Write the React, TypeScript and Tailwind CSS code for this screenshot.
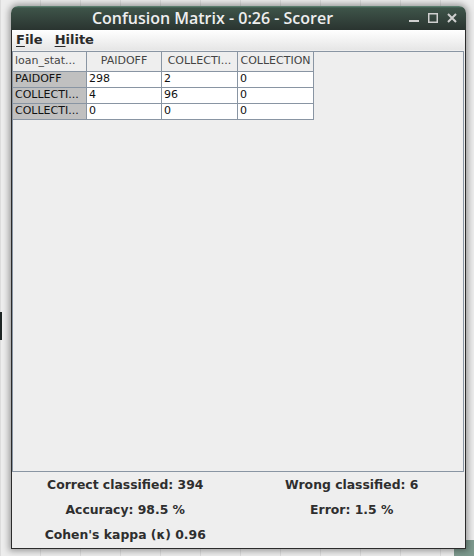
import React from 'react'

type Row = { label: string; values: string[] }

const columns = ['loan_stat...', 'PAIDOFF', 'COLLECTI...', 'COLLECTION']
const colWidths = ['w-[74px]', 'w-[75px]', 'w-[76px]', 'w-[75px]']

const rows: Row[] = [
  { label: 'PAIDOFF', values: ['298', '2', '0'] },
  { label: 'COLLECTI...', values: ['4', '96', '0'] },
  { label: 'COLLECTI...', values: ['0', '0', '0'] },
]

const stats: string[] = [
  'Correct classified: 394',
  'Wrong classified: 6',
  'Accuracy: 98.5 %',
  'Error: 1.5 %',
  "Cohen's kappa (\u03ba) 0.96",
  '',
]

function TitleButtons(): JSX.Element {
  return (
    <div className="flex h-full w-[58px] shrink-0 items-center gap-[9px] pl-[1px] text-[#cfcfcf]">
      <svg width="10" height="10" viewBox="0 0 10 10">
        <rect x="0" y="7" width="10" height="2" fill="currentColor" />
      </svg>
      <svg width="10" height="10" viewBox="0 0 10 10">
        <rect x="0.75" y="0.75" width="8.5" height="8.5" fill="none" stroke="currentColor" strokeWidth="1.5" />
      </svg>
      <svg width="10" height="10" viewBox="0 0 10 10">
        <path d="M1 1 L9 9 M9 1 L1 9" stroke="currentColor" strokeWidth="2" />
      </svg>
    </div>
  )
}

function MatrixTable(): JSX.Element {
  return (
    <div className="flex w-fit flex-col border-r border-b border-[#8995a3] font-['DejaVu_Sans',sans-serif] text-[11px]">
      <div className="flex h-[19px]">
        {columns.map((col, i) => (
          <div
            key={i}
            className={`${colWidths[i]} flex items-center overflow-hidden whitespace-nowrap border-r border-[#8995a3] bg-[#eeeeee] text-[#444] last:border-r-0 ${
              i === 0 ? 'justify-start pl-[2px]' : 'justify-center'
            }`}
          >
            {col}
          </div>
        ))}
      </div>
      {rows.map((row, r) => (
        <div key={r} className="flex h-[16px] border-t border-[#8995a3]">
          <div className="flex w-[74px] items-center overflow-hidden whitespace-nowrap border-r border-[#8995a3] bg-[#c0c0c0] pl-[2px] text-[#111]">
            {row.label}
          </div>
          {row.values.map((v, c) => (
            <div
              key={c}
              className={`${colWidths[c + 1]} flex items-center border-r border-[#8995a3] bg-white pl-[2px] text-[#111] last:border-r-0`}
            >
              {v}
            </div>
          ))}
        </div>
      ))}
    </div>
  )
}

export default function App(): JSX.Element {
  return (
    <div className="relative h-[556px] w-[474px] overflow-hidden bg-[#ededed] bg-[linear-gradient(90deg,#dcdcdc_1px,transparent_1px)] bg-[length:40px_40px] pl-[11px] pt-[6px]">
      <div className="absolute left-0 top-[312px] h-[28px] w-[2px] bg-[#1e2624]" />
      <div className="absolute bottom-0 right-0 h-[16px] w-[20px] bg-[#7d9a8e]" />
      <div className="relative flex h-[543px] w-[455px] flex-col rounded-t-[7px] shadow-[0_0_6px_2px_rgba(0,0,0,0.35)]">
        {/* title bar */}
        <div className="flex h-[24px] shrink-0 items-center rounded-t-[7px] bg-[linear-gradient(180deg,#628a78_0px,#3e5449_2px,#2a3430_100%)]">
          <div className="flex-1 pl-[6px] text-center font-['Open_Sans',sans-serif] text-[16px] font-semibold leading-none text-[#eeeeee]">
            Confusion Matrix - 0:26 - Scorer
          </div>
          <TitleButtons />
        </div>

        <div className="flex min-h-0 flex-1 flex-col border-x border-b border-[#2b2b2b] bg-[#eeeeee]">
          {/* menu bar */}
          <div className="flex h-[20px] shrink-0 items-center gap-[12px] bg-[linear-gradient(180deg,#ffffff,#e6e6e6)] pl-[4px] font-['DejaVu_Sans',sans-serif] text-[13px] font-bold text-[#2a2a2a]">
            <span>
              <span className="underline underline-offset-[2px]">F</span>ile
            </span>
            <span>
              <span className="underline underline-offset-[2px]">H</span>ilite
            </span>
          </div>

          {/* table scroll pane */}
          <div className="mr-[1px] mt-[1px] min-h-0 flex-1 border border-[#8995a3] bg-[#eeeeee]">
            <MatrixTable />
          </div>

          {/* statistics */}
          <div className="grid h-[76px] shrink-0 grid-cols-2 grid-rows-3 pt-[1px] font-['DejaVu_Sans',sans-serif] text-[12.4px] font-bold text-[#2e2e2e]">
            {stats.map((s, i) => (
              <div key={i} className="flex items-center justify-center whitespace-nowrap">
                {s}
              </div>
            ))}
          </div>
        </div>
      </div>
    </div>
  )
}
